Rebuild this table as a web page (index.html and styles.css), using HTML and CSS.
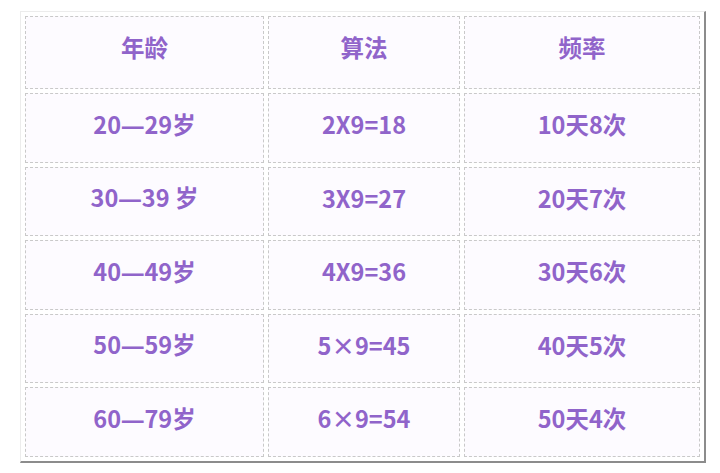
FILE: index.html
```html
<!DOCTYPE html>
<html lang="zh">
<head>
<meta charset="utf-8">
<link rel="stylesheet" href="styles.css">
</head>
<body>
<div class="page">
  <table class="freq">
    <colgroup>
      <col class="c1"><col class="c2"><col class="c3">
    </colgroup>
    <tr class="head"><td>年龄</td><td>算法</td><td>频率</td></tr>
    <tr><td>20<span class="dash">—</span>29岁</td><td>2X9=18</td><td>10天8次</td></tr>
    <tr><td>30<span class="dash">—</span>39 岁</td><td>3X9=27</td><td>20天7次</td></tr>
    <tr><td>40<span class="dash">—</span>49岁</td><td>4X9=36</td><td>30天6次</td></tr>
    <tr><td>50<span class="dash">—</span>59岁</td><td>5×9=45</td><td>40天5次</td></tr>
    <tr><td>60<span class="dash">—</span>79岁</td><td>6×9=54</td><td>50天4次</td></tr>
  </table>
</div>
</body>
</html>
```
FILE: styles.css
```css
html, body {
  margin: 0;
  padding: 0;
  background: #ffffff;
}
.page {
  padding: 11px 0 0 20px;
}
.freq {
  border-collapse: separate;
  border-spacing: 4px;
  border-top: 1px solid #ececec;
  border-left: 1px solid #ececec;
  border-right: 2px solid #8c8c8c;
  border-bottom: 2px solid #8c8c8c;
  padding: 0;
  margin: 0;
  table-layout: fixed;
  width: 682px;
}
.freq col.c1 { width: 239px; }
.freq col.c2 { width: 192px; }
.freq col.c3 { width: 236px; }
.freq td {
  height: 69.6px;
  padding: 0 0 6px 0;
  box-sizing: border-box;
  border: 1px dashed #c9c9c9;
  background: #fdfbff;
  text-align: center;
  vertical-align: middle;
  font-family: "Noto Sans CJK SC", sans-serif;
  font-weight: 700;
  font-size: 23.5px;
  color: #9064ca;
  line-height: 1;
}
.freq td .dash {
  font-family: "Noto Sans", sans-serif;
}
.freq tr.head td {
  height: 73px;
  padding-bottom: 10px;
}
```
